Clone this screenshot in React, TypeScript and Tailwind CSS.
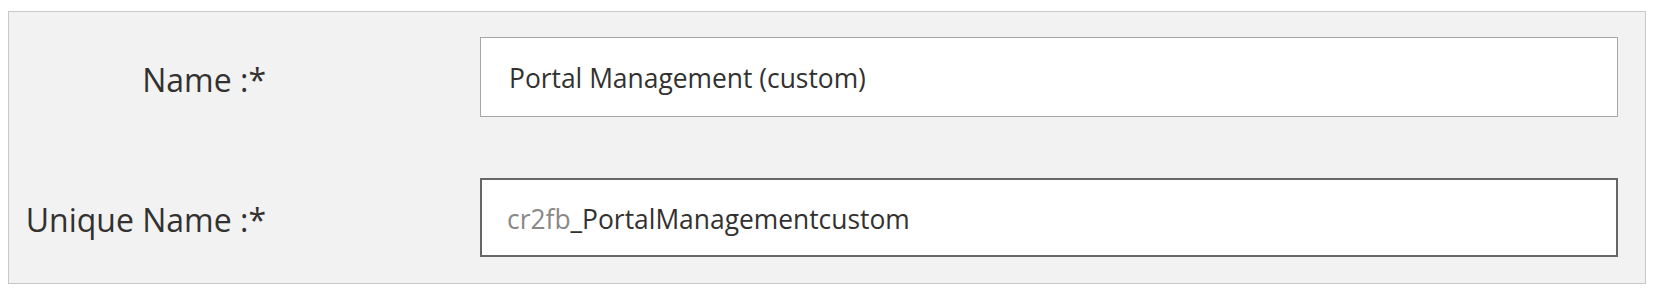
export default function App() {
  return (
    <div className="min-h-screen bg-white pl-[8px] pr-[16px] pt-[11px]" style={{ fontFamily: '"Open Sans", "Noto Sans", sans-serif' }}>
      <div className="border border-[#c8c8c8] bg-[#f2f2f2] pt-[25px] pb-[26px] pr-[27px]">
        <div className="flex flex-col gap-[61px]">
          <div className="flex items-center">
            <label className="w-[257px] shrink-0 pt-[5px] text-right text-[32px] text-[#323130]">Name :*</label>
            <div className="ml-[214px] flex h-[80px] flex-1 items-center border border-[#a6a6a6] bg-white pl-[28px] pt-[4px] text-[26.4px] text-[#323130]">
              Portal Management (custom)
            </div>
          </div>
          <div className="flex items-center">
            <label className="w-[257px] shrink-0 pt-[5px] text-right text-[32px] text-[#323130]">Unique Name :*</label>
            <div className="ml-[214px] flex h-[79px] flex-1 items-center border-2 border-[#666666] bg-white pl-[25px] pt-[4px] text-[26.4px] text-[#323130]">
              <span className="text-[#8a8886]">cr2fb</span>
              <span>_PortalManagementcustom</span>
            </div>
          </div>
        </div>
      </div>
    </div>
  );
}
